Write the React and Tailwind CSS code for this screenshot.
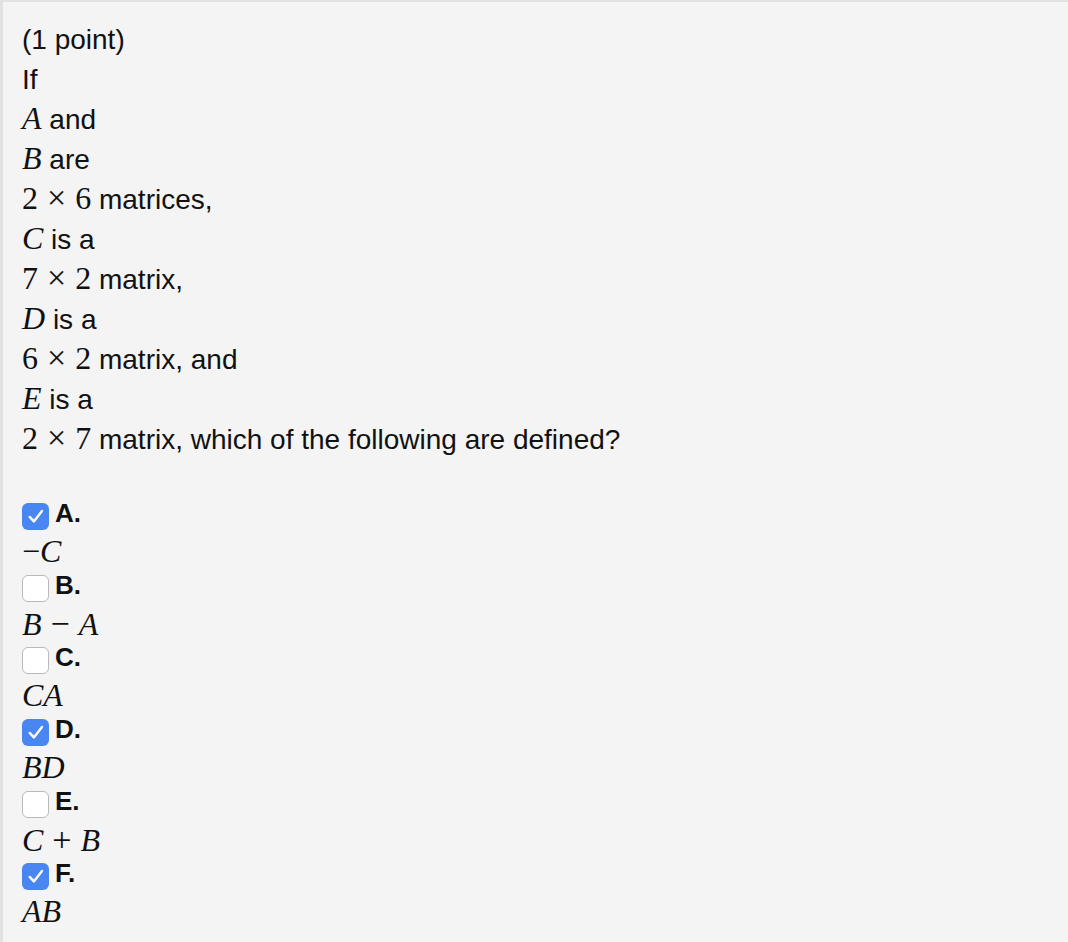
import React from 'react';

const SANS = { fontFamily: '"Liberation Sans", Arial, sans-serif' };

function M({ children }) {
  return <span className="font-['Liberation_Serif',serif] italic text-[32px] leading-none">{children}</span>;
}

function N({ children }) {
  return <span className="font-['Liberation_Serif',serif] text-[32px] leading-none">{children}</span>;
}

function Op({ children }) {
  return <span className="font-['Liberation_Serif',serif] not-italic text-[34px] leading-none mx-[9px]">{children}</span>;
}

const LINES = [
  <>(1 point)</>,
  <>If</>,
  <><M>A</M> and</>,
  <><M>B</M> are</>,
  <><N>2</N><Op>×</Op><N>6</N> matrices,</>,
  <><M>C</M> is a</>,
  <><N>7</N><Op>×</Op><N>2</N> matrix,</>,
  <><M>D</M> is a</>,
  <><N>6</N><Op>×</Op><N>2</N> matrix, and</>,
  <><M>E</M> is a</>,
  <><N>2</N><Op>×</Op><N>7</N> matrix, which of the following are defined?</>,
];

const OPTIONS = [
  { key: 'A', checked: true, expr: <><N>−</N><M>C</M></> },
  { key: 'B', checked: false, expr: <><M>B</M><Op>−</Op><M>A</M></> },
  { key: 'C', checked: false, expr: <M>CA</M> },
  { key: 'D', checked: true, expr: <M>BD</M> },
  { key: 'E', checked: false, expr: <><M>C</M><Op>+</Op><M>B</M></> },
  { key: 'F', checked: true, expr: <M>AB</M> },
];

function Box({ checked }) {
  if (checked) {
    return (
      <span className="w-[27px] h-[27px] rounded-[6px] bg-[#4a86f1] flex items-center justify-center shrink-0">
        <svg width="24" height="24" viewBox="0 0 16 16" fill="none">
          <path d="M3.8 8.6 L6.6 11.6 L12 4.6" stroke="white" strokeWidth="1.6" strokeLinecap="round" strokeLinejoin="round" />
        </svg>
      </span>
    );
  }
  return <span className="w-[27px] h-[27px] rounded-[6px] bg-white border border-[#b9b9b9] shrink-0" />;
}

export default function App() {
  return (
    <div className="min-h-[942px] bg-[#f4f4f4] border-l-[3px] border-t-2 border-[#e2e2e2] pl-[19px] pt-[18px] text-[28px] text-[#111]" style={SANS}>
      <div>
        {LINES.map((l, i) => (
          <div key={i} className="h-[40px] flex items-center whitespace-nowrap">
            <span className="leading-[40px]">{l}</span>
          </div>
        ))}
      </div>
      <div className="mt-[37px]">
        {OPTIONS.map((o) => (
          <div key={o.key} className="h-[72px]">
            <div className="h-[38px] flex items-center gap-[6px]">
              <Box checked={o.checked} />
              <span className="font-bold text-[26px] -mt-[6px]">{o.key}.</span>
            </div>
            <div className="h-[34px] flex items-start">
              <span className="leading-[26px]">{o.expr}</span>
            </div>
          </div>
        ))}
      </div>
    </div>
  );
}
